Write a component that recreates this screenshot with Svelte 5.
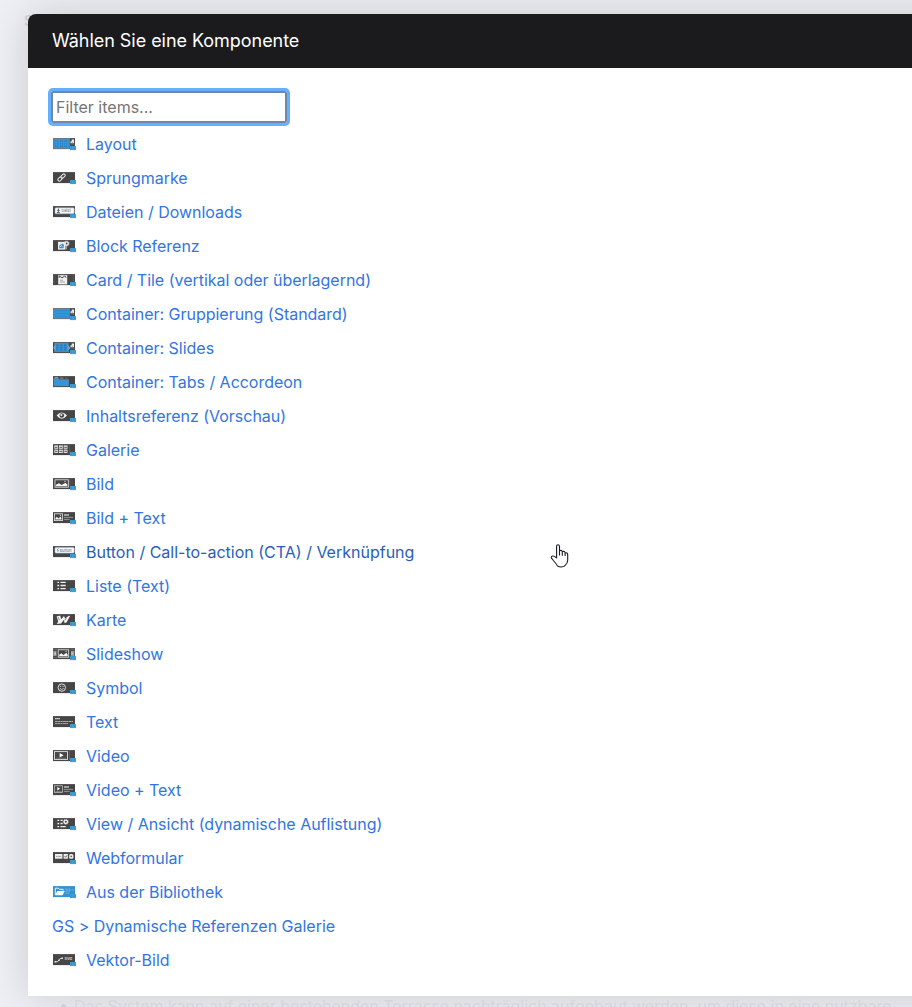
<script>
  const items = [
    ['layout', 'Layout'],
    ['anchor', 'Sprungmarke'],
    ['download', 'Dateien / Downloads'],
    ['block', 'Block Referenz'],
    ['card', 'Card / Tile (vertikal oder überlagernd)'],
    ['group', 'Container: Gruppierung (Standard)'],
    ['slides', 'Container: Slides'],
    ['tabs', 'Container: Tabs / Accordeon'],
    ['eye', 'Inhaltsreferenz (Vorschau)'],
    ['gallery', 'Galerie'],
    ['image', 'Bild'],
    ['imagetext', 'Bild + Text'],
    ['button', 'Button / Call-to-action (CTA) / Verknüpfung', true],
    ['list', 'Liste (Text)'],
    ['map', 'Karte'],
    ['slideshow', 'Slideshow'],
    ['symbol', 'Symbol'],
    ['text', 'Text'],
    ['video', 'Video'],
    ['videotext', 'Video + Text'],
    ['view', 'View / Ansicht (dynamische Auflistung)'],
    ['form', 'Webformular'],
    ['library', 'Aus der Bibliothek'],
    [null, 'GS > Dynamische Referenzen Galerie'],
    ['vector', 'Vektor-Bild']
  ];
</script>

{#snippet picture(x, y, w, h)}
  <rect {x} {y} width={w} height={h} fill="#444" stroke="#e8e8e8" stroke-width=".8" />
  <path d="M{x + 1} {y + h - 1}V{y + h * 0.68}L{x + w * 0.3} {y + h * 0.45}L{x + w * 0.5} {y + h * 0.7}L{x + w * 0.78} {y + h * 0.4}L{x + w - 1} {y + h * 0.65}V{y + h - 1}Z" fill="#f4f4f4" />
  <circle cx={x + w * 0.75} cy={y + 1.6} r=".6" fill="#ddd" />
{/snippet}

{#snippet lines()}
  <path d="M12 4h5" stroke="#ddd" stroke-width="1.2" />
  <path d="M12 6.4h9M12 8.4h5.5" stroke="#aaa" stroke-width=".8" />
{/snippet}

{#snippet gear(x, y)}
  <circle cx={x} cy={y} r="1.7" fill="none" stroke="#f2f2f2" stroke-width="1.4" />
  <circle cx={x} cy={y} r="2.5" fill="none" stroke="#ddd" stroke-width=".8" stroke-dasharray="1 .96" />
{/snippet}

{#snippet corner()}
  <path d="M18.5 6.2V4.2h1.2V2.6h2.3v3.6z" fill="#eee" />
  <path d="M19.6 5.2h1.5" stroke="#777" stroke-width=".6" />
  <path d="M18.5 7.7h4" stroke="#777" stroke-width=".5" />
{/snippet}

<main class="page">
  <span class="behind-top" aria-hidden="true">S</span>
  <section class="dialog">
    <header><h1>Wählen Sie eine Komponente</h1></header>
    <div class="body">
      <input type="text" placeholder="Filter items..." />
      <ul>
        {#each items as [icon, label, active]}
          <li>
            {#if icon}
              <svg width="24" height="14" viewBox="0 0 24 14" aria-hidden="true">
                <rect x="1" y="1.1" width="22" height="11" fill={icon === 'library' ? '#3690ce' : '#464646'} />
                {#if icon === 'layout'}
                  <rect x="1.4" y="1.6" width="16.3" height="10" fill="#3994d6" stroke="#7a7a7a" stroke-width=".7" />
                  <path d="M4.8 3.2v6.8M9.3 3.2v6.8M13.8 3.2v6.8" stroke="#2b78b5" stroke-width="2.6" stroke-dasharray="1.8 .7" />
                  <path d="M4.8 3.5v6M9.3 3.5v6M13.8 3.5v6" stroke="#3f9bdc" stroke-width="1" />
                  {@render corner()}
                {:else if icon === 'anchor'}
                  <g fill="none" stroke="#e8e8e8" stroke-width="1">
                    <rect x="-2.5" y="-1.4" width="5" height="2.8" rx="1.4" transform="translate(8 8) rotate(-43)" />
                    <rect x="-2.5" y="-1.4" width="5" height="2.8" rx="1.4" transform="translate(11 5.1) rotate(-43)" />
                  </g>
                {:else if icon === 'download'}
                  <rect x="3" y="2.8" width="19.2" height="6" rx="1" fill="#fafafa" stroke="#92b9cc" stroke-width=".5" />
                  <path d="M6.4 3.6v2.8M5.3 5.2l1.1 1.2 1.1-1.2M4.9 7.6h3" stroke="#444" stroke-width=".9" fill="none" />
                  <text x="9.4" y="7.3" font-size="3.8" fill="#666">Datei</text>
                {:else if icon === 'block'}
                  <rect x="6" y="2.8" width="7.5" height="7.8" fill="#eee" />
                  <path d="M7 9.2l.6-3.3 1.8-.5.6-1.2 2 1.8-.5 3.2z" fill="#328cc4" />
                  <path d="M8 8.2l1.3-1.6 1.4 1.3" stroke="#fff" stroke-width=".8" fill="none" />
                  {@render gear(14.6, 4.6)}
                  <path d="M14.5 7.3v3" stroke="#ccc" stroke-width=".7" />
                {:else if icon === 'card'}
                  <path d="M2 2v9M21.5 2v7" stroke="#656565" stroke-width=".7" />
                  <rect x="6.2" y="2.2" width="9" height="9.2" fill="#f0f0f0" />
                  <path d="M7.2 4.8V3l1.4.8 1.5 1L12.8 3l1.4 1.8" stroke="#444" stroke-width="1" fill="none" />
                  <path d="M8 7.2h3M8 9h5" stroke="#888" stroke-width=".7" />
                {:else if icon === 'group'}
                  <rect x="1.4" y="1.6" width="16.3" height="10" fill="#3994d6" stroke="#7a7a7a" stroke-width=".7" />
                  <path d="M3 3.6h13M3 6.7h13M3 9.8h13" stroke="#2a7dbc" stroke-width=".6" stroke-dasharray="2 .6" />
                  {@render corner()}
                {:else if icon === 'slides'}
                  <rect x="2.3" y="2" width="14.5" height="9" fill="#3994d6" stroke="#777" stroke-width=".5" />
                  <path d="M5.3 3.5v6M9.3 3.5v6M13.2 3.5v6" stroke="#2b78b5" stroke-width="2.3" stroke-dasharray="1.7 .7" />
                  <path d="M3.8 4.4L1.5 6.8l2.3 2.3M15.5 4.4l2.6 2.4-2.6 2.3" fill="#4aa6e3" stroke="#62b8ec" />
                  {@render corner()}
                {:else if icon === 'tabs'}
                  <path d="M1.8 11.1V2.8h4.4l1 1.8h9.6v6.5z" fill="#3794d6" stroke="#6b8798" stroke-width=".4" />
                  <path d="M3 2.6h3M8.2 3.1h3.2" stroke="#b09a92" stroke-width=".9" />
                  <path d="M13 3.1h3" stroke="#777" stroke-width=".7" />
                {:else if icon === 'eye'}
                  <path d="M4.6 6.6Q9.8.2 15 6.6Q9.8 13 4.6 6.6Z" fill="#f1f1f1" />
                  <circle cx="9.8" cy="6.5" r="2.3" fill="#444" />
                  <circle cx="9.4" cy="5.9" r="1" fill="#eee" />
                {:else if icon === 'gallery'}
                  {#each [2.3, 7, 11.7] as x}
                    <rect {x} y="2.4" width="3.8" height="3.4" fill="#ddd" />
                    <rect {x} y="6.6" width="3.8" height="3.4" fill="#ddd" />
                    <path d="M{x + 0.6} 4.4h2.6M{x + 0.6} 8.4h2.6" stroke="#555" stroke-width=".9" fill="none" />
                  {/each}
                  <path d="M17.7 2v9" stroke="#777" stroke-width=".5" />
                {:else if icon === 'image'}
                  {@render picture(3, 2.8, 13.3, 7.4)}
                  <path d="M18 2v9" stroke="#777" stroke-width=".5" />
                {:else if icon === 'imagetext'}
                  {@render picture(2.4, 2.8, 8, 6.8)}
                  {@render lines()}
                {:else if icon === 'button'}
                  <rect x="3" y="2.4" width="19.2" height="5.7" rx="1" fill="#fafafa" stroke="#a7c7dc" stroke-width=".6" />
                  <path d="M6.4 3.3l-1.2 1.9h1.2l-.8 1.8" stroke="#4297c8" stroke-width=".8" fill="none" />
                  <text x="7.8" y="6.7" font-size="3.8" fill="#555">Button</text>
                {:else if icon === 'list'}
                  <path d="M5.4 3.4h1.7M5.4 6.5h1.7M5.4 9.6h1.7M8.5 3.4h5.2M8.5 6.5h5.2M8.5 9.6h5.2" stroke="#eee" stroke-width="1.3" />
                {:else if icon === 'map'}
                  <path d="M4.6 3.4l3.6-.9 1 3.7 2.8-3.2 1.1 2.6 3.8-2.9 1.2.3-3.6 6.5-2 .6-.7-3-2.8 3.4-4.2.4 1.4-2.4z" fill="#f2f2f2" />
                  <path d="M6.2 4.2l1.2 3M12.4 7.5l2-2.4" stroke="#464646" stroke-width=".6" fill="none" />
                {:else if icon === 'slideshow'}
                  <path d="M1 2.8h4M18.5 2.8H23M1 10.4h4" stroke="#888" stroke-width=".6" />
                  <rect x="1.2" y="4" width="3.3" height="5" fill="#999" />
                  <rect x="19" y="4" width="3.4" height="5" fill="#999" />
                  {@render picture(6.2, 2.8, 10.5, 7.4)}
                  <path d="M3.8 5L2.1 6.6l1.7 1.5zM19.5 5l1.7 1.6-1.7 1.5z" fill="#bce5fb" />
                {:else if icon === 'symbol'}
                  <circle cx="9.8" cy="6.6" r="3.7" fill="none" stroke="#eee" stroke-width=".9" />
                  <path d="M7.9 7.4q1.9 2.2 3.8 0M8 5.4h1.2M10.4 5.4h1.2" stroke="#eee" stroke-width=".8" fill="none" />
                {:else if icon === 'text'}
                  <path d="M3 3.6h5" stroke="#d8d8d8" stroke-width="1.2" stroke-dasharray="1.5 .2" />
                  <path d="M3 6.5h18M3 8.6h13" stroke="#b5b5b5" stroke-width=".9" stroke-dasharray="2 .3 3 .3" />
                {:else if icon === 'video'}
                  <rect x="2.5" y="2.6" width="13" height="7.8" fill="#484848" stroke="#e5e5e5" stroke-width=".9" />
                  <path d="M7.6 3.9v4.6l4-2.3z" fill="#fff" />
                  <path d="M4 9.2h10" stroke="#999" stroke-width=".5" />
                  <path d="M17.5 2v9" stroke="#777" stroke-width=".5" />
                {:else if icon === 'videotext'}
                  <rect x="2.4" y="2.8" width="8" height="6.8" fill="#484848" stroke="#ccc" stroke-width=".7" />
                  <path d="M5.3 4v3.6l2.8-1.8z" fill="#fff" />
                  <path d="M3.5 8.5h6" stroke="#aaa" stroke-width=".5" />
                  {@render lines()}
                {:else if icon === 'view'}
                  <path d="M5.4 3.4h1.8M5.4 6.5h1.8M5.4 9.6h1.8M8.5 3.4h2.2M8.5 6.5h2.2M8.5 9.6h5.2" stroke="#eee" stroke-width="1.4" />
                  {@render gear(13.8, 4.8)}
                {:else if icon === 'form'}
                  <rect x="3" y="3" width="7.4" height="4.7" fill="#eee" />
                  <rect x="11.6" y="3" width="4.3" height="4.7" fill="#eee" />
                  <rect x="17.1" y="3" width="4.3" height="4.7" rx="1.5" fill="#eee" />
                  <path d="M4.2 5.4h5" stroke="#888" stroke-width="1" stroke-dasharray="1 .4" />
                  <path d="M12.6 5.2l1 1.1 1.5-2" stroke="#444" stroke-width=".8" fill="none" />
                  <circle cx="19.2" cy="5.3" r=".9" fill="#666" />
                {:else if icon === 'library'}
                  <path d="M3.3 10V3.2h3l1 1.1h3.8v1.4" fill="none" stroke="#e9f7ff" />
                  <path d="M3 10.3l2.2-4.3h7.6l-2.2 4.3z" fill="#f1faff" />
                  <path d="M13 4h2.2v2.2H13M16 6h2V4h-1.6M19.5 5h2.3M13.5 8.2h4" stroke="#83c3eb" stroke-width=".7" fill="none" />
                {:else if icon === 'vector'}
                  <path d="M3.6 8.7q2.7.6 3.2-1.4t3.2-2" stroke="#ddd" stroke-width=".9" fill="none" />
                  <path d="M2.6 8h1.6v1.6H2.6zM9.4 4.4h1.5v1.5H9.4zM6.2 6.7h1.4v1.4H6.2z" fill="#f3f3f3" />
                  <text x="12.6" y="6.8" font-size="3.6" font-weight="700" fill="#ddd">SVG</text>
                {/if}
                <rect x="18" y="9.1" width="6" height="4" fill="#3f9fda" />
                <path d="M19.8 10.2l-.8 .9 .8 .9M22.2 10.2l.8 .9-.8 .9" stroke="#2b80bb" stroke-width=".5" fill="none" />
              </svg>
            {/if}
            <a href="#item" class:active>{label}</a>
          </li>
        {/each}
      </ul>
    </div>
  </section>
  <p class="behind-bottom" aria-hidden="true">Das System kann auf einer bestehenden Terrasse nachträglich aufgebaut werden, um diese in eine nutzbare</p>
  <svg class="cursor" width="20" height="26" viewBox="0 0 20 26" aria-hidden="true">
    <path d="M6.6 15.2V3.4Q6.6 1.8 8 1.8T9.5 3.4V9.4V7.7Q12 6.6 12.3 9V10.2V8.6Q14.8 7.8 15.1 10V11.2V9.8Q17.5 9.2 17.7 11.6V17.2Q17.4 20.2 15.7 21.7Q14.5 23.8 11.5 24Q8.8 24 7.4 22.8Q6.2 20.6 3.4 17.5L1.5 15.2Q.8 12.8 3.1 13Q4.8 13.2 6.6 15.2M9.5 9.4V12.5M12.3 10V12.7M15.1 11V13" fill="#fff" stroke="#191b29" stroke-width="1.1" stroke-linejoin="round" />
  </svg>
</main>

<style>
  :global(body) { margin: 0; overflow: hidden; }
  .page {
    position: relative;
    box-sizing: border-box;
    width: 912px;
    height: 1007px;
    padding: 14px 0 0 28px;
    overflow: hidden;
    background: #eff0f5;
    font-family: Inter, sans-serif;
    font-size: 16px;
  }
  .dialog {
    position: relative;
    width: 1000px;
    height: 982px;
    border-radius: 8px 8px 0 0;
    background: #fff;
    box-shadow: 0 0 44px rgba(0, 0, 0, .16);
  }
  header {
    box-sizing: border-box;
    height: 54px;
    padding: 15px 24px;
    border-radius: 8px 8px 0 0;
    background: #1b1b1d;
  }
  h1 { margin: 0; color: #fff; font-size: 18px; font-weight: 400; line-height: 24px; letter-spacing: -.04px; }
  .body { padding: 23px 24px; }
  input {
    display: block;
    box-sizing: border-box;
    width: 236px;
    height: 32px;
    margin: 0 0 0 -1px;
    padding: 0 3px;
    border: 2px solid #6f87ad;
    border-radius: 2px;
    outline: 3px solid #64b0fd;
    font: 16px Inter, sans-serif;
  }
  input::placeholder { color: #757575; opacity: 1; }
  ul { margin: 4px 0 0; padding: 0; list-style: none; }
  li { display: flex; align-items: center; height: 34px; gap: 10px; }
  li svg { flex: none; font-family: Inter, sans-serif; }
  a { color: #3275e2; text-decoration: none; line-height: 24px; letter-spacing: -.02px; white-space: nowrap; }
  a.active { color: #2860b8; letter-spacing: 0; }
  .behind-top { position: absolute; left: 24px; top: 12px; color: #d2d4da; font-size: 14px; font-weight: 600; }
  .behind-bottom { position: absolute; left: 74px; top: 996px; margin: 0; color: #d5d6dc; line-height: 20px; letter-spacing: -.02px; white-space: nowrap; }
  .behind-bottom::before { content: ''; position: absolute; left: -13px; top: 8px; width: 5px; height: 5px; border-radius: 50%; background: #cfd1d7; }
  .cursor { position: absolute; left: 550px; top: 543px; }
</style>
